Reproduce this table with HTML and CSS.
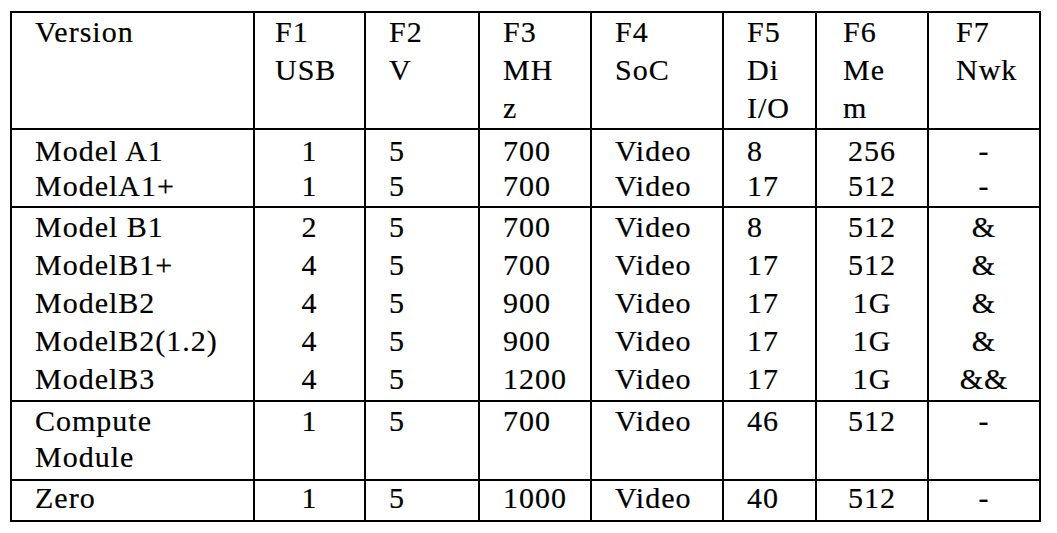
FILE: index.html
```html
<!DOCTYPE html>
<html lang="en">
<head>
<meta charset="utf-8">
<title>Raspberry Pi versions</title>
<link rel="stylesheet" href="styles.css">
</head>
<body>
<div class="sheet">
<table class="spec">
  <colgroup>
    <col class="w-ver"><col class="w-f1"><col class="w-f2"><col class="w-f3">
    <col class="w-f4"><col class="w-f5"><col class="w-f6"><col class="w-f7">
  </colgroup>
  <thead>
    <tr>
      <th>Version</th>
      <th class="p-f1">F1<br>USB</th>
      <th>F2<br>V</th>
      <th>F3<br>MH<br>z</th>
      <th>F4<br>SoC</th>
      <th>F5<br>Di<br>I/O</th>
      <th class="p-f6">F6<br>Me<br>m</th>
      <th class="p-f7">F7<br>Nwk</th>
    </tr>
  </thead>
  <tbody class="g-a">
    <tr><td>Model A1</td><td class="c">1</td><td>5</td><td>700</td><td>Video</td><td>8</td><td class="c">256</td><td class="c">-</td></tr>
    <tr><td>ModelA1+</td><td class="c">1</td><td>5</td><td>700</td><td>Video</td><td>17</td><td class="c">512</td><td class="c">-</td></tr>
  </tbody>
  <tbody class="g-b">
    <tr><td>Model B1</td><td class="c">2</td><td>5</td><td>700</td><td>Video</td><td>8</td><td class="c">512</td><td class="c">&amp;</td></tr>
    <tr><td>ModelB1+</td><td class="c">4</td><td>5</td><td>700</td><td>Video</td><td>17</td><td class="c">512</td><td class="c">&amp;</td></tr>
    <tr><td>ModelB2</td><td class="c">4</td><td>5</td><td>900</td><td>Video</td><td>17</td><td class="c">1G</td><td class="c">&amp;</td></tr>
    <tr><td>ModelB2(1.2)</td><td class="c">4</td><td>5</td><td>900</td><td>Video</td><td>17</td><td class="c">1G</td><td class="c">&amp;</td></tr>
    <tr><td>ModelB3</td><td class="c">4</td><td>5</td><td>1200</td><td>Video</td><td>17</td><td class="c">1G</td><td class="c">&amp;&amp;</td></tr>
  </tbody>
  <tbody class="g-c">
    <tr><td>Compute<br>Module</td><td class="c">1</td><td>5</td><td>700</td><td>Video</td><td>46</td><td class="c">512</td><td class="c">-</td></tr>
  </tbody>
  <tbody class="g-z">
    <tr><td>Zero</td><td class="c">1</td><td>5</td><td>1000</td><td>Video</td><td>40</td><td class="c">512</td><td class="c">-</td></tr>
  </tbody>
</table>
</div>
</body>
</html>
```
FILE: styles.css
```css
html, body {
  margin: 0;
  background: #fff;
}

body {
  font-family: "Liberation Serif", "Times New Roman", serif;
  color: #000;
}

.sheet {
  padding: 11px 0 0 10px;
}

.spec {
  border-collapse: collapse;
  table-layout: fixed;
  width: 1029px;
  border: 2px solid #000;
  font-size: 30px;
  letter-spacing: 1px;
  -webkit-text-stroke: 0.2px #000;
}

.w-ver { width: 243px; }
.w-f1 { width: 111px; }
.w-f2 { width: 114px; }
.w-f3 { width: 112px; }
.w-f4 { width: 132px; }
.w-f5 { width: 93px; }
.w-f6 { width: 112px; }
.w-f7 { width: 112px; }

.spec th,
.spec td {
  border-left: 2px solid #000;
  border-right: 2px solid #000;
  padding: 0 0 0 23px;
  text-align: left;
  vertical-align: top;
  font-weight: normal;
  white-space: nowrap;
}

.spec th.p-f1 { padding-left: 20px; }
.spec th.p-f6 { padding-left: 26px; }
.spec th.p-f7 { padding-left: 27px; }

.spec td.c {
  padding-left: 0;
  text-align: center;
}

.spec thead th {
  line-height: 38px;
  padding-top: 0;
  padding-bottom: 1px;
}

.spec tbody {
  border-top: 2px solid #000;
}

.g-a td { line-height: 35px; }
.g-a tr:first-child td { padding-top: 3px; }
.g-a tr:last-child td { padding-bottom: 3px; }

.g-b td { line-height: 38px; }
.g-b tr:last-child td { padding-bottom: 2px; }

.g-c td { line-height: 36px; padding-top: 1px; padding-bottom: 4px; }

.g-z td { line-height: 33px; padding-bottom: 6px; }
```
